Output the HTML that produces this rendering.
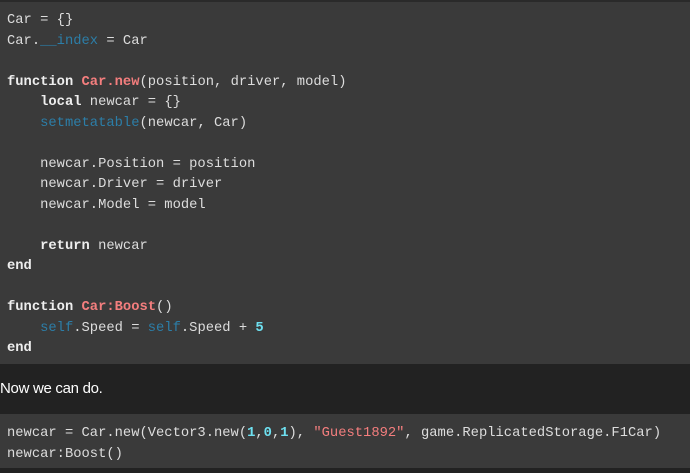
<!DOCTYPE html><html><head><style>
body{margin:0;background:#222;width:690px;height:473px;overflow:hidden}
.c{background:#3a3a3a;font:13.8px/20.5px "Liberation Mono",monospace;color:#ddd;white-space:pre;padding:0 7px}
.k{font-weight:bold;color:#eee}.f{color:#f47e7e;font-weight:bold}.b{color:#2c7ea8}.n{color:#6ee0f0;font-weight:bold}.s{color:#f47e7e}
p{margin:0;color:#fff;font:15px/50px "Liberation Sans",sans-serif;height:50px;letter-spacing:-0.3px}
</style></head><body>
<div style="height:2px;background:#2a2a2a"></div>
<div class="c" style="padding-top:9px;padding-bottom:1px;height:352px">Car = {}
Car.<span class="b">__index</span> = Car

<span class="k">function</span> <span class="f">Car.new</span>(position, driver, model)
    <span class="k">local</span> newcar = {}
    <span class="b">setmetatable</span>(newcar, Car)

    newcar.Position = position
    newcar.Driver = driver
    newcar.Model = model

    <span class="k">return</span> newcar
<span class="k">end</span>

<span class="k">function</span> <span class="f">Car:Boost</span>()
    <span class="b">self</span>.Speed = <span class="b">self</span>.Speed + <span class="n">5</span>
<span class="k">end</span></div>
<p>Now we can do.</p>
<div class="c" style="padding-top:10px;height:44px">newcar = Car.new(Vector3.new(<span class="n">1</span>,<span class="n">0</span>,<span class="n">1</span>), <span class="s">"Guest1892"</span>, game.ReplicatedStorage.F1Car)
newcar:Boost()</div>
</body></html>
